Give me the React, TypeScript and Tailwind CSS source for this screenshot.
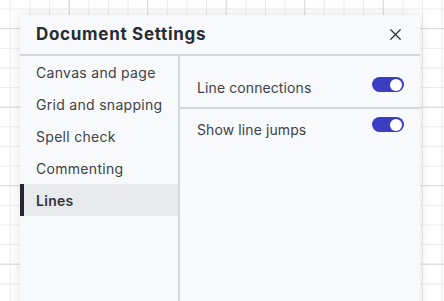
import { X } from "lucide-react";

const sections = [
  "Canvas and page",
  "Grid and snapping",
  "Spell check",
  "Commenting",
  "Lines",
];

function Toggle() {
  return (
    <div className="flex h-[15px] w-[32px] shrink-0 items-center justify-end rounded-full bg-[#3b3ec2] px-[2px]">
      <div className="h-[12px] w-[12px] rounded-full bg-white" />
    </div>
  );
}

export default function App() {
  const active = "Lines";

  return (
    <div
      className="h-[301px] w-[444px] overflow-hidden bg-white bg-[linear-gradient(to_right,#dadada_1px,transparent_1px),linear-gradient(to_bottom,#dadada_1px,transparent_1px),linear-gradient(to_right,#ececec_1px,transparent_1px),linear-gradient(to_bottom,#ececec_1px,transparent_1px)] bg-[length:78.5px_78.5px,78.5px_78.5px,19.625px_19.625px,19.625px_19.625px] bg-[position:-9.8px_28.2px,-9.8px_28.2px,-9.8px_28.2px,-9.8px_28.2px] pl-[20px] pt-[15px]"
      style={{ fontFamily: "Inter, 'Noto Sans', sans-serif" }}
    >
      <section className="flex h-[310px] w-[400px] flex-col bg-[#f8f9fb] shadow-[0_0_10px_rgba(0,0,0,0.12)]">
        <header className="flex h-[41px] items-center justify-between border-b-2 border-[#d3d7dd] pl-[16px] pr-[15px]">
          <h1 className="text-[17px] font-bold tracking-[0.7px] text-[#282c33]">
            Document Settings
          </h1>
          <X className="h-[19px] w-[19px] text-[#2a2d33]" strokeWidth={1.5} />
        </header>

        <div className="flex flex-1">
          <nav className="w-[160px] border-r-2 border-[#d3d7dd]">
            {sections.map((name) => (
              <div
                key={name}
                className={
                  name === active
                    ? "flex h-[32px] items-center border-l-4 border-[#25282d] bg-[#e9eaec] pl-[12px] text-[14px] font-semibold tracking-[0.3px] text-[#2f3339]"
                    : "flex h-[32px] items-center pl-[16px] text-[14px] tracking-[0.3px] text-[#3d4248]"
                }
              >
                {name}
              </div>
            ))}
          </nav>

          <div className="flex-1">
            <div className="flex items-start justify-between border-b-2 border-[#d3d7dd] pb-[9px] pl-[17px] pr-[16px] pt-[21px]">
              <span className="mt-[1px] text-[14px] leading-[20px] tracking-[0.1px] text-[#3d4248]">
                Line connections
              </span>
              <Toggle />
            </div>
            <div className="flex items-start justify-between pl-[17px] pr-[16px] pt-[8px]">
              <span className="mt-[3px] text-[14px] leading-[20px] tracking-[0.1px] text-[#3d4248]">
                Show line jumps
              </span>
              <Toggle />
            </div>
          </div>
        </div>
      </section>
    </div>
  );
}
